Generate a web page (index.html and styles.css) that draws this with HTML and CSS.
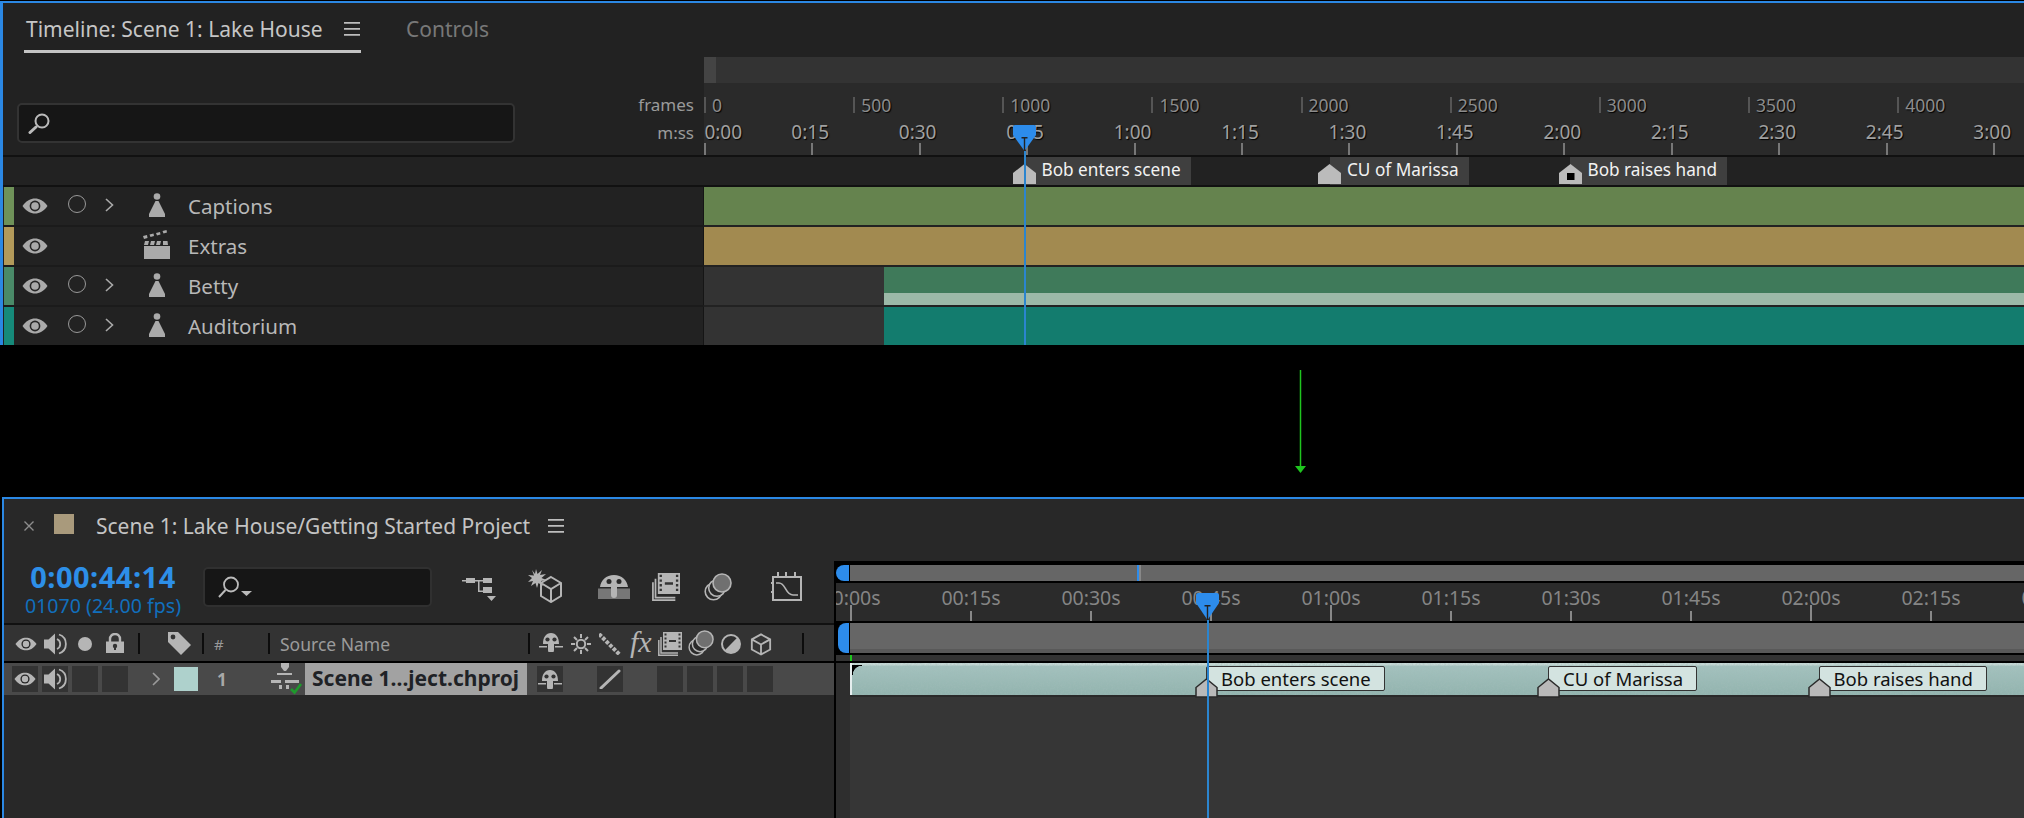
FILE: index.html
```html
<!DOCTYPE html>
<html lang="en">
<head>
<meta charset="utf-8">
<title>Timeline: Scene 1: Lake House</title>
<link rel="stylesheet" href="styles.css">
</head>
<body>
<svg class="defs" width="0" height="0" aria-hidden="true">
  <symbol id="eye" viewBox="0 0 26 16"><path fill="currentColor" d="M.5 8C4.5 2.5 8.5.5 13 .5S21.500 2.500 25.500 8C21.500 13.500 17.500 15.500 13 15.500S4.500 13.500.5 8z"/><circle cx="13" cy="8" r="5.400" fill="#262626"/><circle cx="13" cy="8" r="3.800" fill="currentColor"/></symbol>
  <symbol id="person" viewBox="0 0 16 24"><circle cx="8" cy="3.500" r="3.300" fill="currentColor"/><path fill="currentColor" d="M6.500 8h3L16 21v3H0v-3z"/></symbol>
  <symbol id="clapper" viewBox="0 0 27 29"><path fill="currentColor" d="M1 16h26v13H1zM2 11h4l-1 4H1zM8 11h4l-1 4H7zM14 11h4l-1 4h-4zM20 11h4.500l.5 4h-5zM0 6l4-1 .5 3-3.500 1zM6.500 4.500l4-1 .5 2.500-3.500 1zM13 3l4-1 .5 2.500-3.500 1zM19.500 1l4-1 .5 2.500-3.500 1z"/></symbol>
  <symbol id="speaker" viewBox="0 0 23 22"><path fill="currentColor" d="M0 6.500h4.500L11 .5v21l-6.500-6H0z"/><path fill="none" stroke="currentColor" stroke-width="1.800" d="M13 6a5.500 5.500 0 0 1 0 10M15 1.500a10 10 0 0 1 0 19"/></symbol>
  <symbol id="lock" viewBox="0 0 18 20"><path fill="none" stroke="currentColor" stroke-width="2.400" d="M4 9V6a5 5 0 0 1 10 0v3"/><path fill="currentColor" d="M0 8.500h18V20H0z"/><circle cx="9" cy="13" r="2.200" fill="#333"/><path fill="#333" d="M8 13h2v4H8z"/></symbol>
  <symbol id="tag" viewBox="0 0 24 24"><path fill="currentColor" d="M1 1h10l13 13-10 10L1 11z"/><circle cx="6" cy="6" r="2.400" fill="#333"/></symbol>
  <symbol id="shy" viewBox="0 0 24 19"><path fill="currentColor" d="M4 11C4 4 7 0 12 0s8 4 8 11h-5v6a3 3 0 0 1-6 0v-6z"/><circle cx="8.500" cy="6.500" r="2.100" fill="#333"/><circle cx="15.500" cy="6.500" r="2.100" fill="#333"/><path fill="currentColor" d="M0 13h8v1.500H0zM16 13h8v1.500h-8z"/></symbol>
  <symbol id="cube" viewBox="0 0 24 24"><path fill="none" stroke="currentColor" stroke-width="2" d="M12 1.500l10 5.500v11l-10 5.500L2 18V7zM2 7l10 5.500L22 7M12 12.500v11"/></symbol>
  <symbol id="film" viewBox="0 0 24 24"><path fill="currentColor" d="M5 0h19v18H5z"/><path fill="#333" d="M6.500 1.500h2v2h-2zM6.500 5.500h2v2h-2zM6.500 9.500h2v2h-2zM6.500 13.500h2v2h-2zM20.500 1.500h2v2h-2zM20.500 5.500h2v2h-2zM20.500 9.500h2v2h-2zM20.500 13.500h2v2h-2zM11 8h7v2h-7z"/><path fill="none" stroke="currentColor" stroke-width="1.500" d="M3 5v16h17M.8 8v15.300H20"/></symbol>
  <symbol id="blur" viewBox="0 0 28 28"><circle cx="9.500" cy="18.500" r="8.300" fill="#2a2a2a" stroke="currentColor" stroke-width="1.600"/><circle cx="13" cy="15" r="8.300" fill="#2a2a2a" stroke="currentColor" stroke-width="1.600"/><circle cx="18" cy="10" r="9" fill="#707070" stroke="currentColor" stroke-width="1.600"/></symbol>
</svg>

<main class="screen">
  <section class="panel-top">
    <div class="head-grid">
      <div class="head-left">
        <nav class="tabs">
          <div class="tab tab-active">
            <span>Timeline: Scene 1: Lake House</span>
            <svg class="burger" viewBox="0 0 16 14"><path fill="currentColor" d="M0 0h16v1.800H0zM0 6h16v1.800H0zM0 12h16v1.800H0z"/></svg>
          </div>
          <div class="tab tab-off">Controls</div>
        </nav>
        <div class="search-row">
          <div class="search search-top">
            <svg class="search-ico" viewBox="0 0 23 21"><circle cx="14" cy="8" r="6.500" fill="none" stroke="currentColor" stroke-width="2"/><path stroke="currentColor" stroke-width="3" stroke-linecap="round" d="M8 14l-6 5.500"/></svg>
          </div>
          <div class="units"><span>frames</span><span>m:ss</span></div>
        </div>
      </div>
      <div class="head-right">
        <div class="scroll"><div class="scroll-thumb"></div></div>
        <div class="frames">
          <span class="fcell">0</span><span class="fcell">500</span><span class="fcell">1000</span><span class="fcell">1500</span><span class="fcell">2000</span><span class="fcell">2500</span><span class="fcell">3000</span><span class="fcell">3500</span><span class="fcell">4000</span>
        </div>
        <div class="times">
          <div class="tcell tcell-first"><span>0:00</span><i></i></div>
          <div class="tcell"><span>0:15</span><i></i></div>
          <div class="tcell"><span>0:30</span><i></i></div>
          <div class="tcell"><span>0:45</span><i></i></div>
          <div class="tcell"><span>1:00</span><i></i></div>
          <div class="tcell"><span>1:15</span><i></i></div>
          <div class="tcell"><span>1:30</span><i></i></div>
          <div class="tcell"><span>1:45</span><i></i></div>
          <div class="tcell"><span>2:00</span><i></i></div>
          <div class="tcell"><span>2:15</span><i></i></div>
          <div class="tcell"><span>2:30</span><i></i></div>
          <div class="tcell"><span>2:45</span><i></i></div>
          <div class="tcell"><span>3:00</span><i></i></div>
        </div>
      </div>
    </div>

    <div class="tracks-wrap">
      <div class="marker-row">
        <div class="t-marker" style="left:320px"><span class="t-label">Bob enters scene</span><svg class="t-pin" viewBox="0 0 23 20"><path fill="#bbb" d="M0 20V9L11.500 0 23 9v11z"/></svg></div>
        <div class="t-marker" style="left:625.500px"><span class="t-label">CU of Marissa</span><svg class="t-pin" viewBox="0 0 23 20"><path fill="#bbb" d="M0 20V9L11.500 0 23 9v11z"/></svg></div>
        <div class="t-marker" style="left:866px"><span class="t-label">Bob raises hand</span><svg class="t-pin" viewBox="0 0 23 20"><path fill="#bbb" d="M0 20V9L11.500 0 23 9v11z"/><path fill="#000" d="M8 9h7.500v7H8z"/></svg></div>
      </div>
      <div class="track">
        <div class="track-label"><b class="strip c-green"></b><svg class="i-eye"><use href="#eye"/></svg><em class="solo"></em><svg class="chev" viewBox="0 0 9 14"><path d="M1 1l6.500 6L1 13" fill="none" stroke="currentColor" stroke-width="1.600"/></svg><span class="kind"><svg class="i-person"><use href="#person"/></svg></span><span class="tname">Captions</span></div>
        <div class="clip-lane"><div class="clip c-green"></div></div>
      </div>
      <div class="track">
        <div class="track-label"><b class="strip c-tan"></b><svg class="i-eye"><use href="#eye"/></svg><em class="solo solo-none"></em><svg class="chev chev-none" viewBox="0 0 9 14"></svg><span class="kind"><svg class="i-clapper"><use href="#clapper"/></svg></span><span class="tname">Extras</span></div>
        <div class="clip-lane"><div class="clip c-tan"></div></div>
      </div>
      <div class="track">
        <div class="track-label"><b class="strip c-sea"></b><svg class="i-eye"><use href="#eye"/></svg><em class="solo"></em><svg class="chev" viewBox="0 0 9 14"><path d="M1 1l6.500 6L1 13" fill="none" stroke="currentColor" stroke-width="1.600"/></svg><span class="kind"><svg class="i-person"><use href="#person"/></svg></span><span class="tname">Betty</span></div>
        <div class="clip-lane clip-late"><div class="clip c-sea"><div class="clip-band"></div></div></div>
      </div>
      <div class="track track-last">
        <div class="track-label"><b class="strip c-teal"></b><svg class="i-eye"><use href="#eye"/></svg><em class="solo"></em><svg class="chev" viewBox="0 0 9 14"><path d="M1 1l6.500 6L1 13" fill="none" stroke="currentColor" stroke-width="1.600"/></svg><span class="kind"><svg class="i-person"><use href="#person"/></svg></span><span class="tname">Auditorium</span></div>
        <div class="clip-lane clip-late"><div class="clip c-teal"></div></div>
      </div>
      <div class="playhead playhead-top">
        <svg class="ph-head" viewBox="0 0 23 26"><path fill="#2d8ceb" d="M2 0h19a2 2 0 0 1 2 2v8L11.500 26 0 10V2a2 2 0 0 1 2-2z"/><path fill="#222" d="M8.500 12h6v1.500h-2.300V26h-1.400V13.500H8.500z"/></svg>
        <div class="ph-line"></div>
      </div>
    </div>
  </section>

  <div class="gap">
    <svg class="arrow" viewBox="0 0 11 103"><path stroke="#1fc51f" stroke-width="1.500" d="M5.500 0v98"/><path fill="#1fc51f" d="M0 96h11l-5.500 7z"/></svg>
  </div>

  <section class="panel-bottom">
    <header class="title-bar">
      <svg class="close" viewBox="0 0 10 10"><path stroke="currentColor" stroke-width="1.400" d="M.5.500l9 9M9.500.500l-9 9"/></svg>
      <b class="comp-swatch"></b>
      <h1 class="comp-title">Scene 1: Lake House/Getting Started Project</h1>
      <svg class="burger burger-comp" viewBox="0 0 16 14"><path fill="currentColor" d="M0 0h16v1.800H0zM0 6h16v1.800H0zM0 12h16v1.800H0z"/></svg>
    </header>
    <div class="comp-grid">
      <div class="comp-left">
        <div class="controls">
          <div class="timecode"><strong>0:00:44:14</strong><span>01070 (24.00 fps)</span></div>
          <div class="search search-comp">
            <svg class="search-ico2" viewBox="0 0 34 22"><circle cx="13" cy="8.500" r="7" fill="none" stroke="currentColor" stroke-width="1.800"/><path stroke="currentColor" stroke-width="2" d="M7.500 14L1 21"/><path fill="currentColor" d="M23 15h11l-5.500 5z"/></svg>
          </div>
          <div class="tools">
            <svg class="t-flow" viewBox="0 0 34 24"><path fill="currentColor" d="M0 3h6v1.500H0zM4 1h9v5H4zM13 3h8v1.500h-8zM16 3h1.500v10.500H21V15h-5zM21 1h9v5h-9zM21 10h9v6h-9zM25 19h9l-4.500 5z"/></svg>
            <svg class="t-draft" viewBox="0 0 34 34"><path fill="currentColor" d="M8 0l1.500 5L14 1l-2 5 6-1-4.500 4 5 2-5.500 1 2 5-4.500-3-1.500 5-1.500-5L3 17l2-5-5 1 4-4-4-3 6 .5L4 1l3 4z"/><path fill="none" stroke="currentColor" stroke-width="2" d="M23 8l10 6v13l-10 6-10-6V14zM13 14l10 6 10-6M23 20v13"/></svg>
            <svg class="t-shy" viewBox="0 0 32 24"><path fill="#777" d="M0 13.500h32V24H0z"/><path fill="currentColor" d="M2 12C3 5 8 0 16 0s13 5 14 12h-11v8a3 3 0 0 1-6 0v-8z"/><circle cx="11" cy="6.500" r="2.500" fill="#2a2a2a"/><circle cx="21" cy="6.500" r="2.500" fill="#2a2a2a"/></svg>
            <svg class="t-film"><use href="#film"/></svg>
            <svg class="t-blur"><use href="#blur"/></svg>
            <svg class="t-graph" viewBox="0 0 31 29"><path fill="none" stroke="currentColor" stroke-width="2" d="M2 5h28v23H2z"/><path fill="currentColor" d="M6 0h2v4H6zM14 0h2v4h-2zM23 0h2v4h-2zM0 10h2v2H0zM0 19h2v2H0z"/><path fill="none" stroke="currentColor" stroke-width="1.600" d="M5 11h3c7 0 6 12 14 12h5"/></svg>
          </div>
        </div>
        <div class="col-head">
          <svg class="h-eye"><use href="#eye"/></svg>
          <svg class="h-speaker"><use href="#speaker"/></svg>
          <b class="h-dot"></b>
          <svg class="h-lock"><use href="#lock"/></svg>
          <i class="sep s1"></i>
          <svg class="h-tag"><use href="#tag"/></svg>
          <i class="sep s2"></i>
          <span class="h-num">#</span>
          <i class="sep s3"></i>
          <span class="h-src">Source Name</span>
          <i class="sep s4"></i>
          <svg class="h-shy"><use href="#shy"/></svg>
          <svg class="h-sun" viewBox="0 0 20 20"><circle cx="10" cy="10" r="4.200" fill="none" stroke="currentColor" stroke-width="2"/><path stroke="currentColor" stroke-width="2" d="M10 0v4M10 16v4M0 10h4M16 10h4M3 3l3 3M14 14l3 3M17 3l-3 3M6 14l-3 3"/></svg>
          <svg class="h-collapse" viewBox="0 0 22 22"><path stroke="currentColor" stroke-width="4" stroke-dasharray="3.500 1.500" d="M0 1l21 21"/></svg>
          <span class="h-fx">fx</span>
          <svg class="h-film"><use href="#film"/></svg>
          <svg class="h-blur"><use href="#blur"/></svg>
          <svg class="h-adj" viewBox="0 0 20 20"><circle cx="10" cy="10" r="9" fill="#2f2f2f" stroke="currentColor" stroke-width="2"/><path fill="currentColor" d="M16.400 3.600A9 9 0 0 1 3.600 16.400z"/></svg>
          <svg class="h-cube"><use href="#cube"/></svg>
          <i class="sep s5"></i>
        </div>
        <div class="layer">
          <span class="cell c-a"><svg class="h-eye"><use href="#eye"/></svg></span>
          <span class="cell c-b"><svg class="h-speaker"><use href="#speaker"/></svg></span>
          <span class="cell c-b"></span>
          <span class="cell c-b"></span>
          <svg class="l-chev" viewBox="0 0 8 14"><path d="M1 1l6 6-6 6" fill="none" stroke="currentColor" stroke-width="1.600"/></svg>
          <b class="l-swatch"></b>
          <span class="l-num">1</span>
          <svg class="l-comp" viewBox="0 0 32 32"><path fill="currentColor" d="M10 0h8v4l-3 4h-2l-3-4zM6 10h15v2H6zM0 17h10v3H0zM14 17h14v3H14zM8 22h3v4H8zM15 22h3v4h-3z"/><path fill="none" stroke="#1e9a2c" stroke-width="2.600" d="M20 26l3.500 3.500L30 21"/></svg>
          <span class="l-name">Scene 1...ject.chproj</span>
          <span class="cell c-shy"><svg class="h-shy"><use href="#shy"/></svg></span>
          <span class="cell c-line"><svg class="l-slash" viewBox="0 0 22 20"><path stroke="currentColor" stroke-width="3" stroke-linecap="round" d="M2 19L20 2"/></svg></span>
          <span class="cell c-f"></span>
          <span class="cell c-b"></span>
          <span class="cell c-b"></span>
          <span class="cell c-b"></span>
        </div>
      </div>

      <div class="comp-right">
        <div class="nav"><b class="nav-handle"></b><div class="nav-bar"><i class="nav-mark"></i></div></div>
        <div class="ruler">
          <div class="rcell rlong"><span>00:00s</span><i></i></div>
          <div class="rcell"><span>00:15s</span><i></i></div>
          <div class="rcell"><span>00:30s</span><i></i></div>
          <div class="rcell"><span>00:45s</span><i></i></div>
          <div class="rcell rlong"><span>01:00s</span><i></i></div>
          <div class="rcell"><span>01:15s</span><i></i></div>
          <div class="rcell"><span>01:30s</span><i></i></div>
          <div class="rcell"><span>01:45s</span><i></i></div>
          <div class="rcell rlong"><span>02:00s</span><i></i></div>
          <div class="rcell"><span>02:15s</span><i></i></div>
          <div class="rcell"><span>02:30s</span><i></i></div>
        </div>
        <div class="work"><b class="work-handle"></b><div class="work-bar"></div></div>
        <div class="cti-row"><i class="cti-green"></i></div>
        <div class="lane">
          <div class="bar">
            <svg class="noise" width="100%" height="100%"><filter id="grain"><feTurbulence type="fractalNoise" baseFrequency="0.55" numOctaves="2"/><feColorMatrix values="0 0 0 0 0.35  0 0 0 0 0.5  0 0 0 0 0.48  0 0 0 1.600 -0.550"/></filter><rect width="100%" height="100%" filter="url(#grain)"/></svg>
            <i class="bar-corner"></i>
            <div class="b-marker" style="left:356px"><span class="b-label">Bob enters scene</span><svg class="b-pin" viewBox="0 0 23 20"><path fill="#b9b9b9" stroke="#2a2a2a" stroke-width="1.500" d="M1 19V9.500L11.500 1 22 9.500V19z"/></svg></div>
            <div class="b-marker" style="left:698px"><span class="b-label">CU of Marissa</span><svg class="b-pin" viewBox="0 0 23 20"><path fill="#b9b9b9" stroke="#2a2a2a" stroke-width="1.500" d="M1 19V9.500L11.500 1 22 9.500V19z"/></svg></div>
            <div class="b-marker" style="left:968.500px"><span class="b-label">Bob raises hand</span><svg class="b-pin" viewBox="0 0 23 20"><path fill="#b9b9b9" stroke="#2a2a2a" stroke-width="1.500" d="M1 19V9.500L11.500 1 22 9.500V19z"/></svg></div>
          </div>
        </div>
        <div class="playhead playhead-bottom">
          <svg class="ph-head" viewBox="0 0 23 27"><path fill="#2d8ceb" d="M2 0h19a2 2 0 0 1 2 2v8L11.500 27 0 10V2a2 2 0 0 1 2-2z"/><path fill="#222" d="M8.500 12h6v1.500h-2.300V27h-1.400V13.500H8.500z"/></svg>
          <div class="ph-line"></div>
        </div>
      </div>
    </div>
  </section>
</main>
</body>
</html>
```

FILE: styles.css
```css
* { box-sizing: border-box; }
html, body { margin: 0; padding: 0; background: #000; }
body { font-family: "Noto Sans", "Open Sans", sans-serif; color: #aaa; }
.defs { position: absolute; }
svg { display: block; flex: none; }
.screen { width: 2024px; height: 818px; overflow: hidden; display: flex; flex-direction: column; }

/* ---------- upper panel ---------- */
.panel-top { margin-top: 1px; height: 344px; border-top: 2px solid #2b88e4; border-left: 3px solid #2b88e4; background: #222; }
.head-grid { display: grid; grid-template-columns: 701px 1fr; height: 152px; }
.head-left { background: #222; }
.head-right { background: linear-gradient(#222 54px, #2a2a2a 54px); }
.tabs { height: 50px; display: flex; padding-left: 21px; }
.tab { height: 50px; display: flex; align-items: center; font-size: 21px; }
.tab-active { width: 337px; padding: 5px 1px 0 2px; justify-content: space-between; color: #c6c6c6; border-bottom: 3px solid #c4c4c4; }
.tab-off { margin-left: 45px; padding: 5px 0 3px; color: #787878; }
.burger { width: 16px; height: 14px; color: #bdbdbd; }
.search-row { display: flex; margin-top: 38px; padding-left: 14px; }
.search { background: #161616; border: 2px solid #333; border-radius: 5px; display: flex; align-items: center; }
.search-top { width: 498px; height: 40px; margin-top: 12px; padding-left: 9px; }
.search-ico { width: 23px; height: 21px; color: #bbb; }
.units { width: 179px; display: flex; flex-direction: column; align-items: flex-end; font-size: 17px; line-height: 28px; color: #9a9a9a; }
.scroll { margin-top: 54px; height: 26px; background: #333; }
.scroll-thumb { width: 12px; height: 26px; background: #444; }
.frames { display: flex; margin-top: 14px; height: 16px; }
.fcell { flex: none; width: 149.150px; height: 16px; padding-left: 6px; border-left: 2px solid #555; font-size: 17.500px; line-height: 16px; color: #8c8c8c; text-shadow: 1px 1px 1px #000; }
.times { display: flex; margin-left: -53px; margin-top: 8px; }
.tcell { flex: none; width: 107.460px; display: flex; flex-direction: column; align-items: center; }
.tcell span { line-height: 22px; font-size: 19px; color: #a0a0a0; margin-right: 4px; text-shadow: 1px 1px 1px #000; }
.tcell i { width: 2px; height: 12px; background: #777; }
.tcell-first span { margin-left: 37px; margin-right: 0; }
.tracks-wrap { position: relative; }
.marker-row { position: relative; height: 32px; border-top: 2px solid #111; border-bottom: 2px solid #111; background: #222; }
.t-marker { position: absolute; top: 0; margin-left: 701px; }
.t-label { display: block; height: 28px; line-height: 26px; padding: 0 10px 0 17.500px; background: #3f3f3f; color: #f2f2f2; font-size: 17.200px; white-space: nowrap; }
.t-pin { position: absolute; left: -11.500px; top: 7px; width: 23px; height: 20px; }
.track { display: grid; grid-template-columns: 701px 1fr; height: 38px; margin-bottom: 2px; }
.track-last { margin-bottom: 0; }
.track-label { display: flex; align-items: center; border-right: 1px solid #151515; padding-left: 1px; background: #222; box-shadow: 0 2px 0 #1b1b1b; }
.track-last .track-label { box-shadow: none; }
.strip { width: 10px; height: 38px; flex: none; }
.i-eye { width: 26px; height: 16px; margin-left: 8px; color: #aaa; }
.solo { width: 18px; height: 18px; margin-left: 20px; margin-top: -4px; border: 1.500px solid #999; border-radius: 50%; flex: none; }
.solo-none { visibility: hidden; }
.chev { width: 9px; height: 14px; margin-left: 19px; margin-top: -3px; color: #aaa; }
.chev-none { visibility: hidden; }
.kind { width: 27px; margin-left: 29px; display: flex; justify-content: center; color: #aaa; }
.i-person { width: 16px; height: 24px; margin-top: -2px; }
.i-clapper { width: 27px; height: 29px; margin-top: -4px; }
.tname { margin-left: 18px; font-size: 20.500px; color: #b8b8b8; }
.clip-lane { background: #111; display: flex; }
.clip-late { background: #333; padding-left: 180px; }
.clip { flex: 1; position: relative; }
.clip-band { position: absolute; left: 0; right: 0; bottom: 0; height: 12px; background: #9cb9a8; }
.c-green { background: #65834e; }
.c-tan { background: #a28a50; }
.c-sea { background: #3f7a5a; }
.c-teal { background: #137c6e; }
.strip.c-green { background: #6f9259; }
.strip.c-tan { background: #b39a5a; }
.strip.c-sea { background: #4a8a68; }
.strip.c-teal { background: #168a7a; }

.playhead { position: absolute; }
.playhead-top { left: 1009.500px; top: -30px; bottom: 0; width: 23px; }
.ph-head { width: 23px; height: 26px; }
.ph-line { position: absolute; left: 11px; top: 26px; bottom: 0; width: 2px; background: #2b85cf; }

.gap { flex: none; height: 152px; display: flex; align-items: center; padding-left: 1295px; }
.arrow { width: 11px; height: 103px; }

/* ---------- lower panel ---------- */
.panel-bottom { flex: none; height: 321px; margin-left: 2px; border-top: 2px solid #2b88e4; border-left: 2px solid #2b88e4; background: #282828; }
.title-bar { height: 62px; display: flex; align-items: center; padding: 0 0 8px 20px; }
.close { width: 10px; height: 10px; color: #8d8d8d; }
.comp-swatch { width: 20px; height: 20px; margin-left: 20px; background: #a99a7c; margin-top: -4px; flex: none; }
.comp-title { margin: 0 0 0 22px; font-size: 21px; font-weight: 400; color: #c4c4c4; }
.burger-comp { margin-left: 18px; }
.comp-grid { display: grid; grid-template-columns: 830px 1fr; height: 257px; }
.comp-left { border-right: 2px solid #000; margin-right: -2px; }
.controls { height: 64px; border-bottom: 2px solid #111; display: flex; padding-left: 17px; }
.timecode { width: 164px; margin-right: 18px; display: flex; flex-direction: column; align-items: center; margin-top: 1px; white-space: nowrap; }
.timecode strong { font-size: 29px; line-height: 30px; letter-spacing: .5px; color: #2d8fe8; font-weight: 700; }
.timecode span { font-size: 19.600px; line-height: 28px; color: #116fbc; }
.search-comp { width: 229px; height: 40px; margin-top: 6px; padding-left: 13px; background: #161616; border-color: #303030; }
.search-ico2 { width: 34px; height: 22px; color: #bbb; }
.tools { position: relative; flex: 1; color: #b5b5b5; }
.tools svg { position: absolute; }
.t-flow { left: 30px; top: 16px; width: 34px; height: 24px; }
.t-draft { left: 96px; top: 8px; width: 34px; height: 34px; }
.t-shy { left: 166px; top: 14px; width: 32px; height: 24px; }
.t-film { left: 220px; top: 12px; width: 28px; height: 28px; }
.t-blur { left: 272px; top: 12px; width: 28px; height: 28px; }
.t-graph { left: 339px; top: 11px; width: 31px; height: 29px; }
.col-head { position: relative; height: 38px; background: #333; border-bottom: 2px solid #000; color: #b5b5b5; display: flex; align-items: center; }
.col-head > * { position: absolute; }
.sep { top: 8px; width: 2px; height: 21px; background: #0c0c0c; }
.s1 { left: 134px; } .s2 { left: 198px; } .s3 { left: 264px; } .s4 { left: 524px; } .s5 { left: 798px; }
.h-eye { width: 22px; height: 14px; }
.h-speaker { width: 23px; height: 22px; }
.col-head .h-eye { left: 11px; top: 12px; }
.col-head .h-speaker { left: 40px; top: 8px; }
.h-dot { left: 74px; top: 12px; width: 14px; height: 14px; border-radius: 50%; background: #b5b5b5; }
.h-lock { left: 102px; top: 8px; width: 18px; height: 20px; }
.h-tag { left: 163px; top: 6px; width: 24px; height: 24px; }
.h-num { left: 210px; top: 9px; font-size: 15px; line-height: 20px; color: #999; }
.h-src { left: 276px; top: 6px; font-size: 17.500px; line-height: 26px; color: #9b9b9b; white-space: nowrap; }
.h-shy { width: 24px; height: 19px; }
.col-head .h-shy { left: 535px; top: 8px; }
.h-sun { left: 567px; top: 9px; width: 20px; height: 20px; }
.h-collapse { left: 595px; top: 8px; width: 22px; height: 22px; }
.h-fx { left: 626px; top: 2px; font: italic 30px/30px "Liberation Serif", serif; color: #b5b5b5; }
.h-film { left: 654px; top: 7px; width: 24px; height: 24px; }
.h-blur { left: 684px; top: 5px; width: 26px; height: 26px; }
.h-adj { left: 717px; top: 9px; width: 20px; height: 20px; }
.h-cube { left: 746px; top: 7px; width: 22px; height: 24px; }
.layer { height: 32px; background: #494949; display: flex; align-items: center; position: relative; }
.cell { flex: none; width: 26px; height: 26px; background: #333; display: flex; align-items: center; justify-content: center; color: #b5b5b5; }
.c-a { margin-left: 8px; }
.c-b { margin-left: 4px; }
.l-chev { width: 8px; height: 14px; margin-left: 24px; color: #9a9a9a; }
.l-swatch { width: 24px; height: 24px; margin-left: 14px; background: #aed1cc; flex: none; }
.l-num { margin-left: 19px; font-size: 17px; font-weight: 700; color: #a8a8a8; width: 38px; }
.l-comp { width: 32px; height: 32px; margin-left: 16px; color: #b5b5b5; }
.l-name { flex: none; width: 222px; margin-left: 2px; height: 32px; padding-left: 7px; background: #a2a2a2; color: #1f2226; font-size: 21px; font-weight: 700; line-height: 30px; white-space: nowrap; }
.c-shy { margin-left: 10px; }
.c-line { margin-left: 34px; }
.c-f { margin-left: 34px; }
.l-slash { width: 22px; height: 20px; }

.comp-right { position: relative; overflow: hidden; background: #282828; margin-left: 2px; }
.nav { display: flex; height: 22px; background: #000; padding: 4px 0 2px; }
.nav-handle { width: 13px; background: #2d8ceb; border-radius: 8px 0 0 8px; }
.nav-bar { flex: 1; background: #666; margin-left: 1px; }
.nav-mark { display: block; width: 2px; height: 16px; background: #2d8ceb; margin-left: 287px; box-shadow: 2px 0 0 #888; }
.ruler { display: flex; height: 40px; margin-left: -45px; width: 1400px; background: #2b2b2b; border-bottom: 2px solid #000; }
.rcell { flex: none; width: 120px; height: 38px; display: flex; flex-direction: column; align-items: center; }
.rcell span { height: 28px; line-height: 30px; font-size: 19.500px; color: #858585; }
.rcell i { width: 2px; height: 10px; background: #888; }
.rlong i { height: 16px; margin-top: -6px; }
.work { display: flex; height: 32px; background: #000; padding-bottom: 2px; }
.work-handle { width: 11px; margin-left: 2px; background: #2d8ceb; border-radius: 8px 0 0 8px; }
.work-bar { flex: 1; margin-left: 1px; background: linear-gradient(#666 0, #666 26px, #595959 26px); }
.cti-row { height: 8px; background: #333; border-bottom: 2px solid #000; padding-left: 14px; }
.cti-green { display: block; width: 2px; height: 6px; background: #1fc51f; }
.lane { position: relative; height: 155px; padding-left: 14px; background: linear-gradient(90deg, #2e2e2e 14px, #363636 14px); }
.bar { position: relative; height: 32px; background: linear-gradient(#c6d8d5 0, #c6d8d5 2px, #a4c2be 3px, #92b3ae 100%); border-left: 2px solid #e6eeee; box-shadow: 0 2px 0 #2a2a2a; }
.noise { position: absolute; left: 0; top: 0; opacity: .6; }
.bar-corner { position: absolute; left: 0; top: 2px; width: 10px; height: 10px; background: radial-gradient(circle at 100% 100%, transparent 9px, #000 9.500px); }
.b-marker { position: absolute; top: 3px; margin-left: -2px; }
.b-label { display: block; height: 25px; line-height: 23px; padding: 0 13px 0 14px; background: #d3e3e0; border: 1.500px solid #333; border-radius: 2px; color: #111; font-size: 18.500px; white-space: nowrap; }
.b-pin { position: absolute; left: -11px; top: 12px; width: 23px; height: 20px; }
.playhead-bottom { left: 359.500px; top: 32px; bottom: 0; width: 23px; }
.playhead-bottom .ph-head { height: 27px; }
.playhead-bottom .ph-line { top: 27px; }
```
